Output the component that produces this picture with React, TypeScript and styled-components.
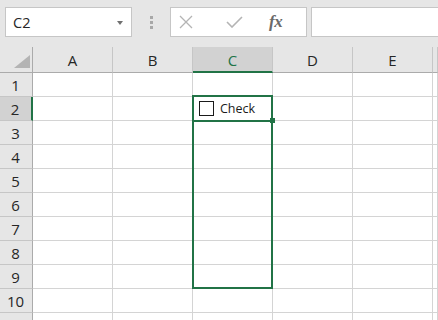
import React from "react";
import styled, { createGlobalStyle } from "styled-components";

const Global = createGlobalStyle`
  html, body { margin: 0; padding: 0; background: #ffffff; overflow: hidden; }
  body { font-family: "Open Sans", "Noto Sans", "Liberation Sans", sans-serif; }
`;

const Page = styled.div`
  width: 438px;
  height: 320px;
  overflow: hidden;
  display: flex;
  flex-direction: column;
  background: #e6e6e6;
`;

const TopBar = styled.div`
  height: 47px;
  flex: none;
  display: flex;
  align-items: flex-start;
  padding: 7px 0 0 5px;
  box-sizing: border-box;
  background: #e6e6e6;
`;

const NameBox = styled.div`
  width: 127px;
  height: 30px;
  box-sizing: border-box;
  background: #ffffff;
  border: 1px solid #c6c6c6;
  display: flex;
  align-items: center;
  justify-content: space-between;
  padding: 0 8px 0 7px;
  font-size: 14.5px;
  color: #262626;
`;

const DropArrow = styled.span`
  width: 0;
  height: 0;
  border-left: 3.5px solid transparent;
  border-right: 3.5px solid transparent;
  border-top: 4px solid #707070;
  margin-top: 1px;
`;

const Grip = styled.div`
  width: 38px;
  height: 30px;
  display: flex;
  flex-direction: column;
  align-items: center;
  justify-content: center;
  gap: 2px;
  padding-top: 1px;
  box-sizing: border-box;
`;

const GripDot = styled.span`
  width: 3px;
  height: 3px;
  background: #a8a8a8;
`;

const FormulaButtons = styled.div`
  width: 137px;
  height: 30px;
  box-sizing: border-box;
  background: #ffffff;
  border: 1px solid #c6c6c6;
  display: flex;
  align-items: center;
  padding-left: 8px;
`;

const IconSlot = styled.div<{ $w: number }>`
  width: ${(p) => p.$w}px;
  height: 28px;
  display: flex;
  align-items: center;
  justify-content: flex-start;
`;

const Fx = styled.span`
  font-family: "Liberation Serif", "DejaVu Serif", serif;
  font-style: italic;
  font-weight: bold;
  font-size: 17px;
  color: #6a6a6a;
  letter-spacing: -0.5px;
  margin-top: -1px;
`;

const FormulaInput = styled.div`
  flex: 1;
  height: 30px;
  margin-left: 4px;
  box-sizing: border-box;
  background: #ffffff;
  border: 1px solid #c6c6c6;
  border-right: none;
`;

const Sheet = styled.div`
  position: relative;
  flex: 1;
  display: grid;
  grid-template-columns: 33px repeat(5, 80px) 1fr;
  grid-template-rows: 26px repeat(11, 24px);
  background: #ffffff;
  overflow: hidden;
`;

const Corner = styled.div`
  background: #e6e6e6;
  border-right: 1px solid #ababab;
  border-bottom: 1px solid #ababab;
  box-sizing: border-box;
  position: relative;
`;

const ColHead = styled.div<{ $active?: boolean }>`
  box-sizing: border-box;
  background: ${(p) => (p.$active ? "#d2d2d2" : "#e6e6e6")};
  color: ${(p) => (p.$active ? "#217346" : "#262626")};
  border-right: 1px solid #c6c6c6;
  border-bottom: ${(p) => (p.$active ? "2px solid #217346" : "1px solid #ababab")};
  display: flex;
  align-items: center;
  justify-content: center;
  font-size: 15px;
  padding-top: 1px;
`;

const RowHead = styled.div<{ $active?: boolean }>`
  box-sizing: border-box;
  background: ${(p) => (p.$active ? "#d2d2d2" : "#e6e6e6")};
  color: #262626;
  border-right: ${(p) => (p.$active ? "2px solid #217346" : "1px solid #ababab")};
  border-bottom: 1px solid #c6c6c6;
  display: flex;
  align-items: center;
  justify-content: center;
  font-size: 15px;
  padding-right: 1px;
`;

const Cell = styled.div`
  box-sizing: border-box;
  border-right: 1px solid #d4d4d4;
  border-bottom: 1px solid #d4d4d4;
  display: flex;
  align-items: center;
`;

const CheckCell = styled(Cell)`
  padding-left: 6px;
  gap: 6px;
  font-size: 12.5px;
  color: #1a1a1a;
`;

const Box = styled.span`
  width: 15px;
  height: 15px;
  box-sizing: border-box;
  border: 1px solid #1a1a1a;
  background: #ffffff;
  flex: none;
`;

const Selection = styled.div`
  position: absolute;
  left: 192px;
  top: 48px;
  width: 81px;
  height: 194px;
  box-sizing: border-box;
  border: 2px solid #217346;
  pointer-events: none;
`;

const ActiveLine = styled.div`
  position: absolute;
  left: 192px;
  top: 73px;
  width: 81px;
  height: 2px;
  background: #217346;
`;

const FillHandle = styled.div`
  position: absolute;
  left: 270px;
  top: 71px;
  width: 5px;
  height: 5px;
  background: #217346;
`;

const cols = ["A", "B", "C", "D", "E", ""];
const rows = [1, 2, 3, 4, 5, 6, 7, 8, 9, 10, 11];

export default function App() {
  return (
    <>
      <Global />
      <Page>
        <TopBar>
          <NameBox>
            <span>C2</span>
            <DropArrow />
          </NameBox>
          <Grip>
            <GripDot />
            <GripDot />
            <GripDot />
          </Grip>
          <FormulaButtons>
            <IconSlot $w={47}>
              <svg width="14" height="14" viewBox="0 0 14 14">
                <path d="M1 1 L13 13 M13 1 L1 13" stroke="#b4b4b4" strokeWidth="1.3" fill="none" />
              </svg>
            </IconSlot>
            <IconSlot $w={43}>
              <svg width="17" height="12" viewBox="0 0 17 12">
                <path d="M1 6 L6 11 L16 1" stroke="#b4b4b4" strokeWidth="1.6" fill="none" />
              </svg>
            </IconSlot>
            <IconSlot $w={30}>
              <Fx>fx</Fx>
            </IconSlot>
          </FormulaButtons>
          <FormulaInput />
        </TopBar>
        <Sheet>
          <Corner>
            <svg width="32" height="25" viewBox="0 0 32 25" style={{ position: "absolute", left: 0, top: 0 }}>
              <polygon points="30,8 30,21 14,21" fill="#b4b4b4" />
            </svg>
          </Corner>
          {cols.map((c, i) => (
            <ColHead key={"h" + i} $active={c === "C"}>
              {c}
            </ColHead>
          ))}
          {rows.map((r) => (
            <React.Fragment key={r}>
              <RowHead $active={r === 2}>{r <= 10 ? r : ""}</RowHead>
              {cols.map((c, i) =>
                r === 2 && c === "C" ? (
                  <CheckCell key={c + r}>
                    <Box />
                    <span>Check</span>
                  </CheckCell>
                ) : (
                  <Cell key={i + "-" + r} />
                )
              )}
            </React.Fragment>
          ))}
          <Selection />
          <ActiveLine />
          <FillHandle />
        </Sheet>
      </Page>
    </>
  );
}
